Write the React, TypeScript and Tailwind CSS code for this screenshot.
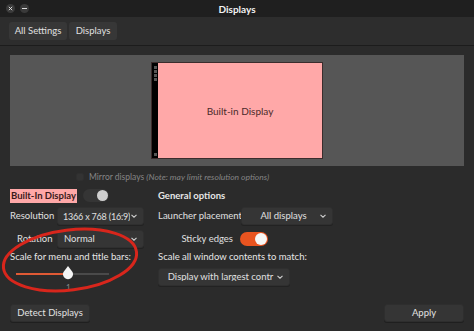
import React from "react";

const Chevron = () => (
  <svg width="8" height="6" viewBox="0 0 8 6" className="shrink-0">
    <path d="M1.5 1.8 L4 4.2 L6.5 1.8" fill="none" stroke="#cfcfcf" strokeWidth="1.1" />
  </svg>
);

const Dropdown = ({ text, w, center, extra }: { text: string; w: string; center?: boolean; extra?: string }) => (
  <div
    className={`${w} shrink-0 h-[18px] rounded-[3px] bg-[#353535] border border-[#2f2f2f] flex items-center pr-[5px] text-[#e0e0e0] shadow-[0_1px_0_#222] ${extra ?? "pl-[6px]"}`}
  >
    <span className={`flex-1 whitespace-nowrap overflow-hidden ${center ? "text-center" : ""}`}>{text}</span>
    <Chevron />
  </div>
);

const Button = ({ children, w }: { children: React.ReactNode; w: string }) => (
  <div className={`${w} h-[18px] rounded-[3px] bg-[#353535] border border-[#2e2e2e] flex items-center justify-center text-[#e2e2e2] shadow-[0_1px_0_#1f1f1f]`}>
    {children}
  </div>
);

export default function App() {
  return (
    <div
      className="w-[474px] h-[331px] bg-[#2b2b2b] flex flex-col overflow-hidden relative text-[9.5px] leading-none whitespace-nowrap"
      style={{ fontFamily: 'Lato, "Noto Sans", sans-serif' }}
    >
      {/* title bar */}
      <div className="h-[17px] bg-[#1f1f1f] relative flex items-center shrink-0">
        <div className="flex items-center gap-[5px] pl-[6px]">
          <div className="w-[9px] h-[9px] rounded-full bg-[#3a3a3a] flex items-center justify-center">
            <svg width="5" height="5" viewBox="0 0 5 5">
              <path d="M0.8 0.8 L4.2 4.2 M4.2 0.8 L0.8 4.2" stroke="#e6e6e6" strokeWidth="0.9" />
            </svg>
          </div>
          <div className="w-[9px] h-[9px] rounded-full bg-[#3a3a3a] flex items-center justify-center">
            <div className="w-[5px] h-[1px] bg-[#dcdcdc]" />
          </div>
        </div>
        <div className="absolute inset-0 flex items-center justify-center font-bold text-[#f2f2f2] text-[10px]">
          Displays
        </div>
      </div>

      {/* toolbar */}
      <div className="h-[29px] bg-[#2d2d2d] border-b border-[#1c1c1c] flex items-center pl-[9px] gap-[2px] shrink-0">
        <div className="w-[58px] h-[18px] rounded-[3px] bg-[#373737] flex items-center justify-center text-[#e0e0e0]">
          All Settings
        </div>
        <div className="w-[48px] h-[18px] rounded-[3px] bg-[#373737] flex items-center justify-center text-[#e0e0e0]">
          Displays
        </div>
      </div>

      {/* content */}
      <div className="flex-1 flex flex-col px-[10px] pt-[9px]">
        {/* preview */}
        <div className="h-[111px] bg-[#565656] flex justify-center pt-[7px] shrink-0">
          <div className="w-[172px] h-[97px] bg-[#3b2c2c] p-[1px] flex">
            <div className="w-[6px] bg-black flex flex-col justify-between pt-[3px] pb-[2px] items-center">
              <div className="flex flex-col gap-[1px]">
                <div className="w-[3px] h-[3px] bg-[#555]" />
                <div className="w-[3px] h-[3px] bg-[#555]" />
                <div className="w-[3px] h-[3px] bg-[#555]" />
                <div className="w-[3px] h-[3px] bg-[#555]" />
              </div>
              <div className="w-[3px] h-[3px] bg-[#555]" />
            </div>
            <div className="flex-1 bg-[#ffa8a8] flex items-center justify-center text-[#4a2a2a] text-[10px]">
              Built-in Display
            </div>
          </div>
        </div>

        {/* mirror */}
        <div className="h-[22px] flex items-center pl-[66px] gap-[5px] text-[#858585] text-[8.5px]">
          <div className="w-[8px] h-[8px] rounded-[2px] bg-[#333] border border-[#2f2f2f]" />
          <span>
            Mirror displays <i>(Note: may limit resolution options)</i>
          </span>
        </div>

        {/* columns */}
        <div className="flex">
          <div className="w-[148px] shrink-0 flex flex-col">
            <div className="flex items-center gap-[6px] h-[15px]">
              <div className="bg-[#ffa8a8] text-[#3a1a1a] font-bold px-[1px] h-[14px] flex items-center">Built-In Display</div>
              <div className="w-[26px] h-[13px] rounded-full bg-[#353535] relative">
                <div className="absolute right-[1px] top-[1px] w-[11px] h-[11px] rounded-full bg-[#cfcfcf]" />
              </div>
            </div>
            <div className="flex items-center mt-[4px] h-[18px]">
              <span className="w-[47px] shrink-0 text-[#e0e0e0]">Resolution</span>
              <Dropdown text="1366 x 768 (16:9)" w="w-[87px]" extra="pl-[5px] text-[9px] tracking-[-0.2px]" />
            </div>
            <div className="flex items-center mt-[5px] h-[18px]">
              <span className="w-[47px] shrink-0 pl-[7px] text-[#e0e0e0]">Rotation</span>
              <Dropdown text="Normal" w="w-[87px]" />
            </div>
            <div className="text-[#e6e6e6] mt-[4px]">Scale for menu and title bars:</div>
            <div className="relative h-[12px] mt-[6px] ml-[6px] w-[93px]">
              <div className="absolute left-0 right-0 top-[5px] h-[2px] bg-[#4a4a4a]" />
              <div className="absolute left-0 w-[52px] top-[5px] h-[2px] bg-[#e05a35]" />
              <svg className="absolute left-[45px] top-[-3px]" width="14" height="16" viewBox="0 0 14 16">
                <path d="M7 1 L11.5 7 A5 5 0 1 1 2.5 7 Z" fill="#f4f4f4" />
              </svg>
            </div>
            <div className="text-[#8a8a8a] text-[8px] ml-[56px] mt-[3px]">1</div>
          </div>

          <div className="flex-1 flex flex-col">
            <div className="font-bold text-[#e6e6e6] h-[15px] flex items-center">General options</div>
            <div className="flex items-center mt-[4px] h-[18px]">
              <span className="w-[83px] shrink-0 text-[#e0e0e0]">Launcher placement</span>
              <Dropdown text="All displays" w="w-[92px]" center />
            </div>
            <div className="flex items-center mt-[5px] h-[18px]">
              <span className="w-[82px] shrink-0 text-right pr-[7px] text-[#e0e0e0]">Sticky edges</span>
              <div className="w-[28px] h-[14px] rounded-full bg-[#e95420] relative">
                <div className="absolute right-[1px] top-[1px] w-[12px] h-[12px] rounded-full bg-[#f6f6f6]" />
              </div>
            </div>
            <div className="text-[#e6e6e6] mt-[4px]">Scale all window contents to match:</div>
            <div className="mt-[6px]">
              <Dropdown text="Display with largest contr" w="w-[132px]" center />
            </div>
          </div>
        </div>

        {/* bottom buttons */}
        <div className="mt-auto mb-[9px] flex justify-between">
          <Button w="w-[80px]">Detect Displays</Button>
          <Button w="w-[80px]">Apply</Button>
        </div>
      </div>

      {/* red annotation ellipse */}
      <svg className="absolute left-0 top-[222px] pointer-events-none" width="150" height="76" viewBox="0 0 150 76">
        <ellipse cx="70" cy="38" rx="67" ry="30" fill="none" stroke="#d8261c" strokeWidth="3" transform="rotate(-7 70 38)" />
      </svg>
    </div>
  );
}
